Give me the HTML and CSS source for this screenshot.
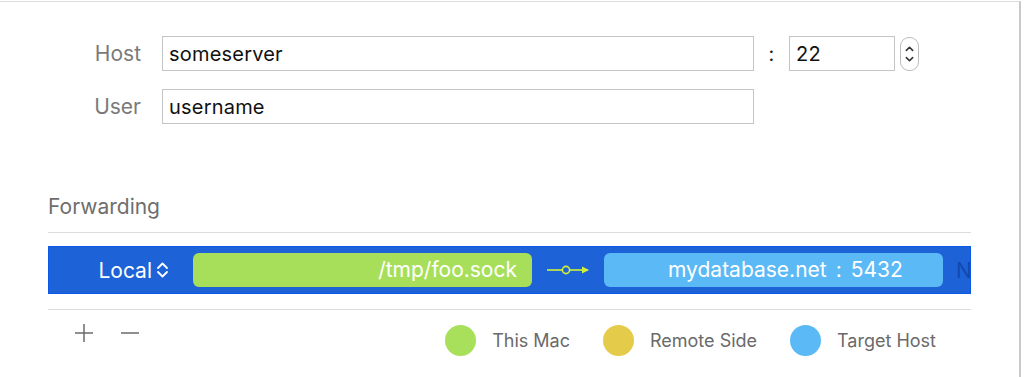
FILE: index.html
```html
<!DOCTYPE html>
<html lang="en">
<head>
    <meta charset="UTF-8">
    <title>SSH Tunnel</title>
    <link rel="stylesheet" href="styles.css">
</head>
<body>
    <div class="window">
        <div class="form">
            <div class="row">
                <label class="label">Host</label>
                <input type="text" class="field host" value="someserver">
                <span class="colon">:</span>
                <input type="text" class="field port" value="22">
                <div class="stepper">
                    <svg width="19" height="34" viewBox="0 0 19 34">
                        <path d="M6 13 L9.5 9.5 L13 13" fill="none" stroke="#333" stroke-width="1.8" stroke-linecap="round" stroke-linejoin="round"/>
                        <path d="M6 21 L9.5 24.5 L13 21" fill="none" stroke="#333" stroke-width="1.8" stroke-linecap="round" stroke-linejoin="round"/>
                    </svg>
                </div>
            </div>
            <div class="row">
                <label class="label">User</label>
                <input type="text" class="field host" value="username">
            </div>
        </div>

        <h3 class="section">Forwarding</h3>
        <div class="rule"></div>

        <div class="forward">
            <div class="kind">
                Local
                <svg width="13" height="22" viewBox="0 0 13 22">
                    <path d="M2 9 L6.5 4.5 L11 9" fill="none" stroke="#fff" stroke-width="1.8" stroke-linecap="round" stroke-linejoin="round"/>
                    <path d="M2 13 L6.5 17.5 L11 13" fill="none" stroke="#fff" stroke-width="1.8" stroke-linecap="round" stroke-linejoin="round"/>
                </svg>
            </div>
            <div class="pill local">/tmp/foo.sock</div>
            <svg class="arrow" width="44" height="12" viewBox="0 0 44 12">
                <line x1="0" y1="6" x2="15" y2="6" stroke="#d2f03a" stroke-width="1.6"/>
                <circle cx="19" cy="6" r="3.6" fill="none" stroke="#d2f03a" stroke-width="1.6"/>
                <line x1="23" y1="6" x2="41" y2="6" stroke="#d2f03a" stroke-width="1.6"/>
                <path d="M35 2.5 L42 6 L35 9.5 Z" fill="#d2f03a"/>
            </svg>
            <div class="pill target">mydatabase.net<span class="sep">:</span>5432</div>
            <span class="more">N</span>
        </div>

        <div class="rule bottom"></div>

        <div class="footer">
            <div class="tools">
                <svg width="18" height="18" viewBox="0 0 18 18">
                    <line x1="0" y1="9" x2="18" y2="9" stroke="#6a6a6a" stroke-width="1.5"/>
                    <line x1="9" y1="0" x2="9" y2="18" stroke="#6a6a6a" stroke-width="1.5"/>
                </svg>
                <svg width="18" height="18" viewBox="0 0 18 18">
                    <line x1="0" y1="9" x2="18" y2="9" stroke="#6a6a6a" stroke-width="1.5"/>
                </svg>
            </div>
            <div class="legend">
                <span class="dot green"></span><span class="name">This Mac</span>
                <span class="dot yellow"></span><span class="name">Remote Side</span>
                <span class="dot blue"></span><span class="name">Target Host</span>
            </div>
        </div>
    </div>
</body>
</html>
```

FILE: styles.css
```css
html, body {
    margin: 0;
    padding: 0;
    background-color: #fff;
}
body {
    width: 1024px;
    height: 377px;
    overflow: hidden;
    font-family: Inter, "Noto Sans", sans-serif;
}
.window {
    width: 1021px;
    height: 376px;
    margin-top: 1px;
    border-top: 1px solid #dcdcdc;
    border-right: 2px solid #c9c9c9;
    box-sizing: border-box;
    padding-left: 48px;
}
.form {
    padding-top: 34px;
    display: flex;
    flex-direction: column;
    gap: 18px;
}
.row {
    display: flex;
    align-items: center;
    height: 35px;
}
.label {
    width: 93px;
    text-align: right;
    font-size: 21px;
    color: #7a7a7a;
    margin-right: 21px;
}
.field {
    height: 35px;
    box-sizing: border-box;
    border: 1px solid #c4c4c4;
    padding: 0 6px;
    font-family: Inter, "Noto Sans", sans-serif;
    font-size: 20px;
    letter-spacing: 0.2px;
    color: #111;
    outline: none;
}
.host {
    width: 592px;
}
.colon {
    width: 35px;
    text-align: center;
    font-size: 20px;
    color: #222;
}
.port {
    width: 106px;
}
.stepper {
    width: 19px;
    height: 34px;
    margin-left: 5px;
    border: 1px solid #bdbdbd;
    border-radius: 9px;
    box-sizing: border-box;
    display: flex;
    align-items: center;
    justify-content: center;
}
.stepper svg {
    display: block;
}
.section {
    margin: 71px 0 0;
    height: 24px;
    line-height: 24px;
    font-size: 21px;
    font-weight: normal;
    color: #6e6e6e;
}
.rule {
    width: 923px;
    height: 1px;
    margin-top: 13px;
    background-color: #dcdcdc;
}
.rule.bottom {
    margin-top: 15px;
}
.forward {
    width: 923px;
    height: 48px;
    margin-top: 13px;
    box-sizing: border-box;
    border: 1px solid #0d57e6;
    background-color: #1d63d7;
    display: flex;
    align-items: center;
    overflow: hidden;
    white-space: nowrap;
}
.kind {
    width: 144px;
    flex: none;
    display: flex;
    align-items: center;
    justify-content: flex-end;
    gap: 4px;
    padding-right: 24px;
    box-sizing: border-box;
    color: #fff;
    font-size: 21px;
}
.kind svg {
    display: block;
}
.pill {
    flex: none;
    width: 339px;
    height: 34px;
    line-height: 34px;
    border-radius: 6px;
    box-sizing: border-box;
    color: #fff;
    font-size: 21px;
}
.local {
    background-color: #a7df5b;
    text-align: right;
    padding-right: 15px;
}
.arrow {
    flex: none;
    margin: 0 13px 0 15px;
    display: block;
}
.target {
    background-color: #5bb9f6;
    padding-left: 64px;
}
.sep {
    margin: 0 9px 0 9px;
}
.more {
    margin-left: 13px;
    color: #1448ae;
    font-size: 21px;
}
.footer {
    width: 923px;
    display: flex;
    align-items: center;
    justify-content: space-between;
    margin-top: 15px;
    height: 31px;
}
.tools {
    display: flex;
    gap: 28px;
    padding-left: 27px;
    margin-top: -16px;
}
.tools svg {
    display: block;
}
.legend {
    display: flex;
    align-items: center;
    padding-right: 35px;
}
.dot {
    width: 31px;
    height: 31px;
    border-radius: 50%;
    margin-right: 16px;
}
.green { background-color: #a8e05b; }
.yellow { background-color: #e5cb4a; }
.blue { background-color: #5bb9f6; }
.name {
    font-size: 18px;
    color: #6a6a6a;
    margin-right: 33px;
}
.name:last-child {
    margin-right: 0;
}
```
